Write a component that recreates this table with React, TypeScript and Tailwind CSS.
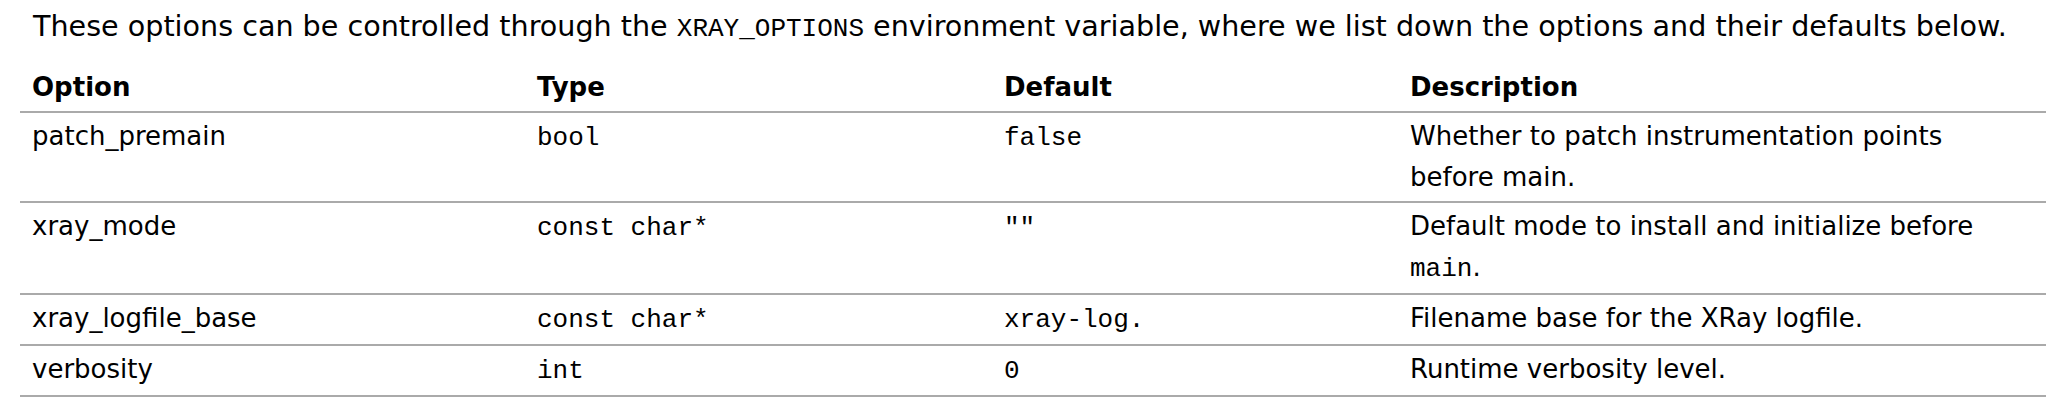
import React from "react";

type OptionRow = {
  name: string;
  type: string;
  def: string;
  desc: React.ReactNode;
};

const mono = "font-['Liberation_Mono',monospace] text-[26px]";

const rows: OptionRow[] = [
  {
    name: "patch_premain",
    type: "bool",
    def: "false",
    desc: "Whether to patch instrumentation points before main.",
  },
  {
    name: "xray_mode",
    type: "const char*",
    def: '""',
    desc: (
      <>
        Default mode to install and initialize before <code className={mono}>main</code>.
      </>
    ),
  },
  {
    name: "xray_logfile_base",
    type: "const char*",
    def: "xray-log.",
    desc: "Filename base for the XRay logfile.",
  },
  {
    name: "verbosity",
    type: "int",
    def: "0",
    desc: "Runtime verbosity level.",
  },
];

export default function App() {
  return (
    <div className="bg-white text-black font-['DejaVu_Sans',sans-serif] pl-5 pr-[14px] pt-[6px]">
      {/* intro paragraph */}
      <p className="pl-[13px] mb-[15px] whitespace-nowrap text-[28.6px] leading-[40px]">
        These options can be controlled through the <code className={mono}>XRAY_OPTIONS</code> environment variable, where we list down the options and their defaults below.
      </p>

      <table className="w-full table-fixed border-collapse text-[26px] leading-[41px]">
        <colgroup>
          <col className="w-[505px]" />
          <col className="w-[467px]" />
          <col className="w-[406px]" />
          <col />
        </colgroup>
        <thead>
          <tr className="border-b-2 border-[#aaaaaa]">
            <th className="text-left font-bold px-3 py-[3px]">Option</th>
            <th className="text-left font-bold px-3 py-[3px]">Type</th>
            <th className="text-left font-bold px-3 py-[3px]">Default</th>
            <th className="text-left font-bold px-3 py-[3px]">Description</th>
          </tr>
        </thead>
        <tbody>
          {rows.map((r) => (
            <tr key={r.name} className="border-b-2 border-[#aaaaaa] align-top">
              <td className="px-3 py-[3px]">{r.name}</td>
              <td className="px-3 py-[3px]">
                <code className={mono}>{r.type}</code>
              </td>
              <td className="px-3 py-[3px]">
                <code className={mono}>{r.def}</code>
              </td>
              <td className="px-3 py-[3px]">{r.desc}</td>
            </tr>
          ))}
        </tbody>
      </table>
    </div>
  );
}
